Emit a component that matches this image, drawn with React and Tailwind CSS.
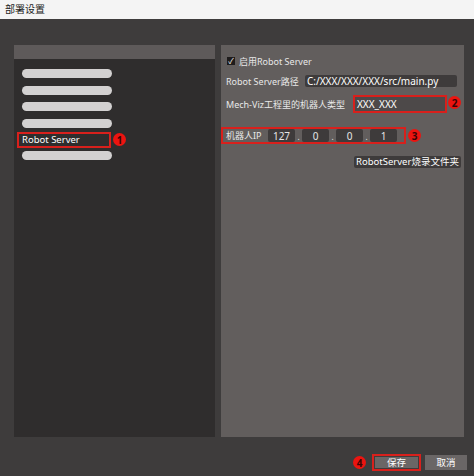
import React from "react";

const font = { fontFamily: '"Noto Sans", "Noto Sans CJK SC", sans-serif' };

function Badge({ n }) {
  return (
    <div className="flex h-[13px] w-[13px] shrink-0 items-center justify-center rounded-full bg-[#ec1410] text-[10px] font-bold leading-none text-[#3a0505]">
      {n}
    </div>
  );
}

function Pill() {
  return <div className="ml-[8px] h-[9px] w-[90px] rounded-full bg-[#d3d1d1]" />;
}

function IpBox({ v }) {
  return (
    <div className="flex h-[13px] w-[27px] shrink-0 items-center justify-center rounded-[2px] bg-[#3e3b3b] text-[10px] leading-none text-[#e6e6e6]">
      {v}
    </div>
  );
}

function Dot() {
  return <span className="flex h-[13px] w-[7px] shrink-0 items-end justify-center pb-[1px] text-[8px] leading-none">.</span>;
}

export default function App() {
  return (
    <div className="flex h-[476px] w-[474px] flex-col bg-[#3e3c3c] text-[9px] text-[#e8e8e8]" style={font}>
      <div className="flex h-[19px] items-center bg-[#f4f4f4] pl-[5px] text-[10px] text-[#222]">部署设置</div>
      <div className="flex flex-1 flex-col pl-[14px] pr-[10px] pt-[26px]">
        <div className="flex h-[392px] gap-[6px]">
          {/* left panel */}
          <div className="flex w-[201px] shrink-0 flex-col bg-[#2f2d2d]">
            <div className="h-[14px] bg-[#5e5a5a]" />
            <div className="flex flex-col pt-[10px]">
              <div className="flex flex-col gap-[7.5px]">
                <Pill />
                <Pill />
                <Pill />
                <Pill />
              </div>
              <div className="mt-[4px] flex items-center">
                <div className="ml-[3px] flex h-[16px] w-[94px] items-center whitespace-nowrap border-2 border-[#d8201c] pl-[3px] text-[9.5px] leading-none text-white">
                  Robot Server
                </div>
                <div className="ml-[2px]">
                  <Badge n="1" />
                </div>
              </div>
              <div className="mt-[3px]">
                <Pill />
              </div>
            </div>
          </div>
          {/* right panel */}
          <div className="flex flex-1 flex-col bg-[#625e5d] pl-[5px] pt-[12px]">
            <div className="flex h-[8px] items-center whitespace-nowrap">
              <div className="ml-[1px] flex h-[8px] w-[8px] items-center justify-center bg-[#1e1c1c] text-[8px] leading-none text-white">✓</div>
              <span className="ml-[4px] leading-none">启用Robot Server</span>
            </div>
            <div className="mt-[10px] flex h-[12px] items-center whitespace-nowrap">
              <span className="w-[79px] shrink-0 leading-none">Robot Server路径</span>
              <div className="flex h-[12px] w-[152px] shrink-0 items-center rounded-[2px] bg-[#3e3b3b] pl-[2px] text-[10px] leading-none text-white">
                C:/XXX/XXX/XXX/src/main.py
              </div>
            </div>
            <div className="mt-[8px] flex h-[18px] items-center whitespace-nowrap">
              <span className="w-[127px] shrink-0 leading-none">Mech-Viz工程里的机器人类型</span>
              <div className="flex h-[18px] w-[94px] shrink-0 items-center border-2 border-[#d8201c] bg-[#4d4949] pl-[2px] text-[10px] leading-none text-white">
                XXX_XXX
              </div>
              <div className="ml-[1px] -mt-[3px]">
                <Badge n="2" />
              </div>
            </div>
            <div className="-ml-[5px] mt-[14px] flex items-center whitespace-nowrap">
              <div className="flex h-[17px] w-[185px] shrink-0 items-center border-2 border-[#d8201c] pl-[3px]">
                <span className="w-[42px] shrink-0 leading-none">机器人IP</span>
                <IpBox v="127" />
                <Dot />
                <IpBox v="0" />
                <Dot />
                <IpBox v="0" />
                <Dot />
                <IpBox v="1" />
              </div>
              <div className="ml-[2px]">
                <Badge n="3" />
              </div>
            </div>
            <div className="mt-[12px] flex justify-end pr-[3px]">
              <div className="flex h-[12px] w-[107px] items-center justify-center whitespace-nowrap rounded-[2px] bg-[#3e3b3b] text-[9.5px] leading-none text-white">
                RobotServer烧录文件夹
              </div>
            </div>
          </div>
        </div>
        <div className="mt-[17px] flex items-center justify-end gap-[4px]">
          <Badge n="4" />
          <div className="ml-[2px] flex h-[17px] w-[49px] items-center justify-center border-2 border-[#d8201c] p-[1px]">
            <div className="flex h-full w-full items-center justify-center bg-[#6a6666] text-[9.5px] leading-none text-white">保存</div>
          </div>
          <div className="mr-[-3px] flex h-[15px] w-[42px] items-center justify-center bg-[#6a6666] text-[9.5px] leading-none text-white">取消</div>
        </div>
      </div>
    </div>
  );
}
